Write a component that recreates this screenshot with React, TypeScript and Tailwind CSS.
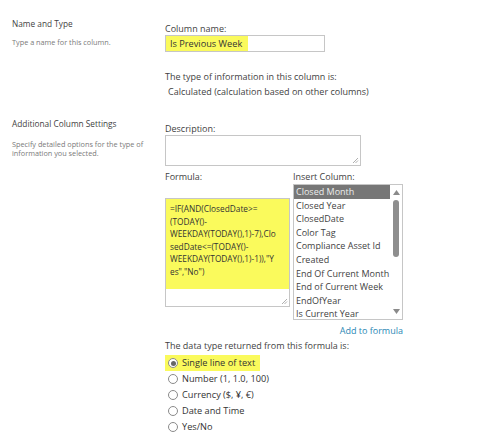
import React, { useState } from "react";

const columns = [
  "Closed Month",
  "Closed Year",
  "ClosedDate",
  "Color Tag",
  "Compliance Asset Id",
  "Created",
  "End Of Current Month",
  "End of Current Week",
  "EndOfYear",
  "Is Current Year",
];

const formulaLines = [
  "=IF(AND(ClosedDate>=",
  "(TODAY()-",
  "WEEKDAY(TODAY(),1)-7),Clo",
  "sedDate<=(TODAY()-",
  'WEEKDAY(TODAY(),1)-1)),"Y',
  'es","No")',
];

const returnTypes = [
  "Single line of text",
  "Number (1, 1.0, 100)",
  "Currency ($, ¥, €)",
  "Date and Time",
  "Yes/No",
];

// little diagonal grip drawn in the corner of a resizable box
const Grip = () => (
  <svg className="absolute right-[1px] bottom-[1px]" width="7" height="7" viewBox="0 0 7 7">
    <path d="M6 1 L1 6 M6 3.5 L3.5 6" stroke="#9a9a9a" strokeWidth="0.8" />
  </svg>
);

const App = () => {
  const [selected] = useState(0);
  const [returnType, setReturnType] = useState(0);

  return (
    <div className="w-[480px] h-[444px] bg-white text-[#3f3f3f] font-['Open_Sans',sans-serif] overflow-hidden">
      {/* Name and Type */}
      <div className="flex">
        <div className="w-[165px] pl-3 pt-[18px] shrink-0">
          <div className="text-[8.3px] leading-[12px]">Name and Type</div>
          <div className="mt-[8px] text-[7.3px] leading-[9px] text-[#7a7a7a]">
            Type a name for this column.
          </div>
        </div>
        <div className="pt-[22px]">
          <div className="text-[9px] leading-[13px]">Column name:</div>
          <div className="w-[160px] h-[17px] border border-[#c6c6c6] flex">
            <div className="bg-[#fafa5c] w-[82px] h-full text-[9.2px] leading-[15px] pl-[4px] text-[#333] whitespace-nowrap">
              Is Previous Week
            </div>
          </div>
          <div className="mt-[18px] text-[9px] leading-[14px]">
            The type of information in this column is:
          </div>
          <div className="mt-[1px] pl-[3px] text-[9px] leading-[14px]">
            Calculated (calculation based on other columns)
          </div>
        </div>
      </div>

      {/* Additional Column Settings */}
      <div className="flex mt-[17px]">
        <div className="w-[165px] pl-3 pt-[2px] shrink-0">
          <div className="text-[8.3px] leading-[12px]">Additional Column Settings</div>
          <div className="mt-[10px] text-[7.3px] leading-[8.5px] text-[#7a7a7a]">
            Specify detailed options for the type of
            <br />
            information you selected.
          </div>
        </div>
        <div className="pt-[6px]">
          <div className="text-[9px] leading-[13px]">Description:</div>
          <div className="relative w-[196px] h-[31px] border border-[#c6c6c6]">
            <Grip />
          </div>

          <div className="flex gap-[3px] mt-[4px]">
            <div className="w-[125px]">
              <div className="text-[9px] leading-[14px]">Formula:</div>
              <div className="relative mt-[14px] h-[109px] border border-[#c6c6c6]">
                <div className="bg-[#fafa5c] h-[90px] pl-[4px] pt-[4px] text-[8.3px] leading-[12.6px] text-[#333]">
                  {formulaLines.map((line) => (
                    <div key={line} className="whitespace-pre">
                      {line}
                    </div>
                  ))}
                </div>
                <Grip />
              </div>
            </div>

            <div className="w-[110px]">
              <div className="text-[9px] leading-[14px]">Insert Column:</div>
              <div className="flex h-[136px] border border-[#c6c6c6]">
                <div className="flex-1 overflow-hidden">
                  {columns.map((col, i) => (
                    <div
                      key={col}
                      className={
                        i === selected
                          ? "h-[13.6px] pl-[2px] text-[9px] leading-[13.6px] bg-[#777] text-[#ececec] whitespace-nowrap"
                          : "h-[13.6px] pl-[2px] text-[9px] leading-[13.6px] text-[#3f3f3f] whitespace-nowrap"
                      }
                    >
                      {col}
                    </div>
                  ))}
                </div>
                <div className="w-[12px] flex flex-col items-center pt-[5px] pb-[5px]">
                  <svg width="7" height="5" viewBox="0 0 7 5">
                    <path d="M0 5 L3.5 0 L7 5 Z" fill="#8a8a8a" />
                  </svg>
                  <div className="mt-[5px] w-[6px] h-[57px] rounded-full bg-[#8e8e8e]" />
                  <div className="flex-1" />
                  <svg width="7" height="5" viewBox="0 0 7 5">
                    <path d="M0 0 L7 0 L3.5 5 Z" fill="#8a8a8a" />
                  </svg>
                </div>
              </div>
              <div className="mt-[4px] text-right text-[9px] leading-[14px] text-[#2b88b5]">
                Add to formula
              </div>
            </div>
          </div>

          <div className="mt-[1px] text-[9px] leading-[14px]">
            The data type returned from this formula is:
          </div>
          <div className="mt-[2px] flex flex-col">
            {returnTypes.map((t, i) => (
              <label
                key={t}
                className={
                  i === 0
                    ? "flex items-center h-[16px] w-[95px] bg-[#fafa5c] pl-[3px] gap-[4px]"
                    : "flex items-center h-[16px] pl-[3px] gap-[4px]"
                }
                onClick={() => setReturnType(i)}
              >
                <span className="w-[10px] h-[10px] rounded-full border border-[#8a8a8a] bg-white flex items-center justify-center">
                  {returnType === i && <span className="w-[5px] h-[5px] rounded-full bg-[#666]" />}
                </span>
                <span className="text-[9.2px] leading-[14px] text-[#333] whitespace-nowrap">{t}</span>
              </label>
            ))}
          </div>
        </div>
      </div>
    </div>
  );
};

export default App;
